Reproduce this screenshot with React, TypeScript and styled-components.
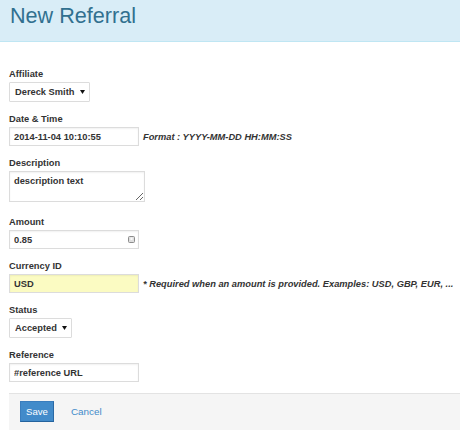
import styled, { createGlobalStyle } from "styled-components";

const GlobalStyle = createGlobalStyle`
  html, body {
    margin: 0;
    padding: 0;
    background: #fff;
  }
  body {
    font-family: "Liberation Sans", Arial, sans-serif;
    color: #333;
  }
`;

const Page = styled.div`
  width: 100%;
  min-height: 430px;
`;

const Header = styled.header`
  height: 42px;
  padding: 3px 0 0 10px;
  box-sizing: border-box;
  background: #d9edf7;
  border-bottom: 1px solid #bfe6f3;
`;

const Title = styled.h1`
  margin: 0;
  font-size: 21.6px;
  line-height: 26px;
  font-weight: 400;
  color: #31708f;
`;

const Form = styled.form`
  padding: 26px 0 0 9px;
`;

const Group = styled.div<{ $gap?: number }>`
  margin-bottom: ${(p) => p.$gap ?? 11}px;
`;

const Label = styled.label`
  display: block;
  font-size: 9.3px;
  line-height: 13px;
  font-weight: 700;
  color: #333;
  margin-bottom: 1px;
`;

const Line = styled.div`
  display: flex;
  align-items: center;
  gap: 4px;
`;

const Hint = styled.span`
  font-size: 9.3px;
  font-weight: 700;
  font-style: italic;
  color: #333;
  white-space: nowrap;
`;

const TextInput = styled.input<{ $highlight?: boolean }>`
  display: block;
  box-sizing: border-box;
  width: 130px;
  height: 19px;
  margin: 0;
  padding: 0 4px;
  border: 1px solid #dcdcdc;
  box-shadow: inset 0 1px 2px rgba(0, 0, 0, 0.06);
  background: ${(p) => (p.$highlight ? "#fbfbc2" : "#fff")};
  font-family: "Liberation Sans", Arial, sans-serif;
  font-size: 9.3px;
  font-weight: 700;
  color: #333;
  outline: none;
`;

const NumberBox = styled.div`
  box-sizing: border-box;
  display: flex;
  align-items: center;
  width: 130px;
  height: 19px;
  padding: 0 3px 0 4px;
  border: 1px solid #dcdcdc;
  box-shadow: inset 0 1px 2px rgba(0, 0, 0, 0.06);
  background: #fff;
`;

const BareInput = styled.input`
  flex: 1;
  min-width: 0;
  border: 0;
  padding: 0;
  background: transparent;
  font-family: "Liberation Sans", Arial, sans-serif;
  font-size: 9.3px;
  font-weight: 700;
  color: #333;
  outline: none;
`;

const TextArea = styled.textarea`
  display: block;
  box-sizing: border-box;
  width: 136px;
  height: 31px;
  margin: 0;
  padding: 3px 4px;
  border: 1px solid #dcdcdc;
  box-shadow: inset 0 1px 2px rgba(0, 0, 0, 0.06);
  font-family: "Liberation Sans", Arial, sans-serif;
  font-size: 9.3px;
  line-height: 12px;
  font-weight: 700;
  color: #333;
  resize: both;
  outline: none;
`;

const SelectWrap = styled.div<{ $width: number }>`
  position: relative;
  width: ${(p) => p.$width}px;
  height: 20px;
`;

const Select = styled.select`
  display: block;
  box-sizing: border-box;
  width: 100%;
  height: 100%;
  margin: 0;
  padding: 0 12px 0 5px;
  appearance: none;
  -webkit-appearance: none;
  border: 1px solid #dcdcdc;
  border-radius: 1px;
  background: #fff;
  font-family: "Liberation Sans", Arial, sans-serif;
  font-size: 9.3px;
  font-weight: 700;
  color: #333;
  outline: none;
`;

const Caret = styled.svg`
  position: absolute;
  right: 5px;
  top: 8px;
  pointer-events: none;
`;

const Footer = styled.div`
  margin-left: 9px;
  padding: 7px 11px 9px;
  display: flex;
  align-items: center;
  gap: 17px;
  background: #f5f5f5;
  border-top: 1px solid #e3e3e3;
`;

const SaveButton = styled.button`
  box-sizing: border-box;
  height: 21px;
  padding: 0 5px;
  border: 1px solid #3a7dbd;
  border-bottom-color: #24639e;
  border-right-color: #2a69a4;
  background: #428bca;
  color: #fff;
  font-family: "Liberation Sans", Arial, sans-serif;
  font-size: 9.6px;
  cursor: pointer;
`;

const CancelLink = styled.a`
  font-size: 9.9px;
  color: #428bca;
  text-decoration: none;
`;

function SelectField({ width, value, options }: { width: number; value: string; options: string[] }) {
  return (
    <SelectWrap $width={width}>
      <Select defaultValue={value}>
        {options.map((o) => (
          <option key={o}>{o}</option>
        ))}
      </Select>
      <Caret width="5" height="4" viewBox="0 0 5 4">
        <path d="M0 0 H5 L2.5 4 Z" fill="#111" />
      </Caret>
    </SelectWrap>
  );
}

function SpinIcon() {
  return (
    <svg width="7" height="7" viewBox="0 0 7 7">
      <rect x="0.5" y="0.5" width="6" height="6" rx="1" fill="#dedede" stroke="#8c8c8c" />
      <rect x="2.5" y="1.5" width="2" height="2.5" fill="#fafafa" />
    </svg>
  );
}

export default function App() {
  return (
    <Page>
      <GlobalStyle />
      <Header>
        <Title>New Referral</Title>
      </Header>
      <Form onSubmit={(e) => e.preventDefault()}>
        <Group>
          <Label>Affiliate</Label>
          <SelectField width={81} value="Dereck Smith" options={["Dereck Smith"]} />
        </Group>
        <Group>
          <Label>Date &amp; Time</Label>
          <Line>
            <TextInput defaultValue="2014-11-04 10:10:55" />
            <Hint>Format : YYYY-MM-DD HH:MM:SS</Hint>
          </Line>
        </Group>
        <Group $gap={14}>
          <Label>Description</Label>
          <TextArea defaultValue="description text" />
        </Group>
        <Group>
          <Label>Amount</Label>
          <NumberBox>
            <BareInput defaultValue="0.85" />
            <SpinIcon />
          </NumberBox>
        </Group>
        <Group>
          <Label>Currency ID</Label>
          <Line>
            <TextInput $highlight defaultValue="USD" />
            <Hint>* Required when an amount is provided. Examples: USD, GBP, EUR, ...</Hint>
          </Line>
        </Group>
        <Group>
          <Label>Status</Label>
          <SelectField width={63} value="Accepted" options={["Accepted", "Pending", "Rejected"]} />
        </Group>
        <Group>
          <Label>Reference</Label>
          <TextInput defaultValue="#reference URL" />
        </Group>
      </Form>
      <Footer>
        <SaveButton type="button">Save</SaveButton>
        <CancelLink href="#">Cancel</CancelLink>
      </Footer>
    </Page>
  );
}
